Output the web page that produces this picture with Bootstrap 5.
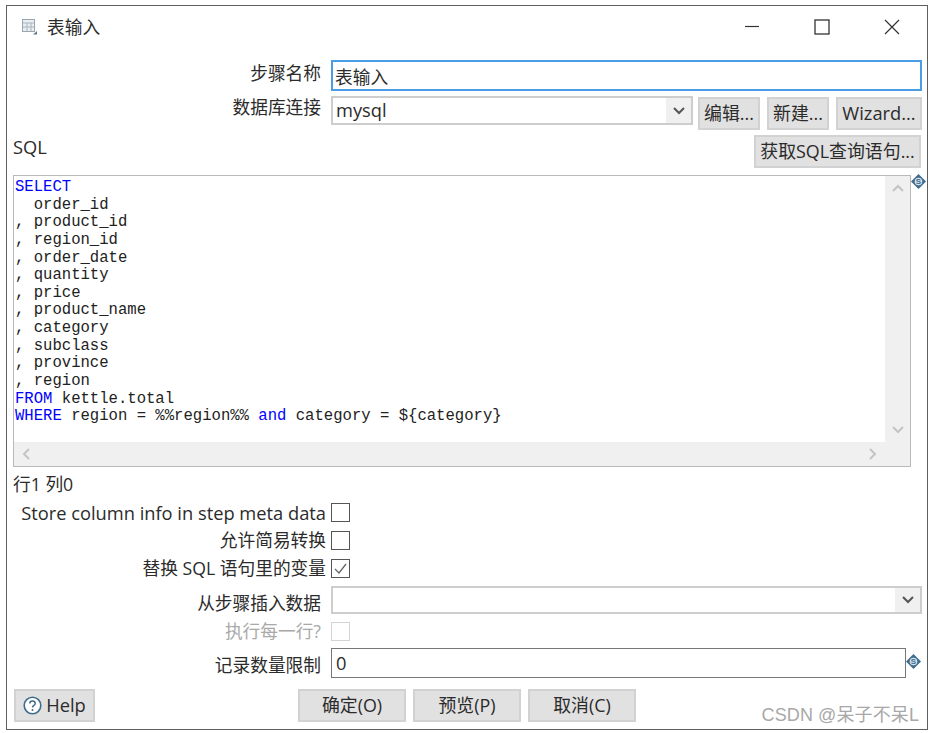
<!DOCTYPE html>
<html lang="zh-CN">
<head>
  <meta charset="UTF-8">
  <title>表输入</title>
  <link href="https://cdn.jsdelivr.net/npm/bootstrap@5.3.2/dist/css/bootstrap.min.css" rel="stylesheet">
  <style>
    body { background: #fff; color: #2b2b2b; font-family: "Open Sans", "Noto Sans CJK SC", sans-serif; font-size: 17.7px; line-height: 1.2; }
    .txt-latin { font-size: 18.3px; }
    .dlg-win { width: 922px; height: 725px; margin: 5px 0 0 6px; border: 1px solid #5f5f5f; padding: 0 5px 0 6px; position: relative; overflow: hidden; }
    .dlg-title { height: 54px; margin-left: -6px; margin-right: -5px; padding: 0 0 12px 15px; }
    .dlg-title-text { margin-left: 9px; padding-top: 2px; }
    .win-ctl { width: 70px; }
    .dlg-row { margin-top: 5px; }
    .dlg-label { width: 318px; padding-right: 10px; flex: none; text-align: right; }
    .dlg-label-check { padding-right: 5px; }
    .dlg-label-off { color: #a9a9a9; padding-right: 10px; }
    .lbl-up { padding-bottom: 4px; }
    .lbl-down { padding-top: 6px; line-height: 1; }
    .lbl-db { padding-top: 1px; }
    .h-name { height: 31px; }
    .h-db { height: 34px; }
    .h-sql { height: 33px; }
    .dlg-input { height: 31px; flex: 1 1 auto; border: 2px solid #4a9ee6; border-radius: 0; padding: 0 2px; font-size: 17.7px; color: #2b2b2b; }
    .dlg-input:focus { border-color: #4a9ee6; box-shadow: none; }
    .dlg-input-dark { height: 30px; border: 1px solid #777; padding: 0 4px 2px; font-size: 18.3px; }
    .dlg-input-dark:focus { border-color: #777; }
    .dlg-combo { height: 29px; border: 2px solid #cdcdcd; background: #fff; }
    .dlg-combo-text { padding-left: 3px; font-size: 18.3px; line-height: 23px; }
    .dlg-combo-arrow { width: 25px; background: #f0f0f0; }
    .dlg-combo-db { width: 362px; flex: none; margin-right: 5px; }
    .dlg-combo-step { height: 28px; margin-top: -1px; }
    .dlg-btn { background: #e1e1e1; border: 2px solid #d2d2d2; border-radius: 0; color: #2b2b2b; font-size: 17.9px; padding: 0; height: 33px; line-height: 1; white-space: nowrap; }
    .w-edit { width: 62px; margin-top: 1px; }
    .w-wizard { width: 86px; margin-top: 1px; font-size: 18.3px; }
    .w-query { width: 167px; margin-right: 1px; }
    .w-help { width: 81px; margin-left: 1px; font-size: 18.3px; }
    .w-main { width: 108px; }
    .dlg-sql-label { line-height: 24px; }
    .dlg-editor { margin-top: 7px; height: 292px; width: 898px; border: 1px solid #b9b9b9; display: grid; grid-template-columns: 1fr 25px; grid-template-rows: 1fr 24px; }
    .dlg-sql { margin: 0; padding: 3px 1px 0; font-family: "Liberation Mono", monospace; font-size: 15.6px; line-height: 17.62px; color: #222; overflow: hidden; }
    .sql-kw { color: #0000ff; }
    .dlg-scroll { background: #f0f0f0; }
    .dlg-status { height: 36px; }
    .dlg-check-row { height: 19px; margin-bottom: 9px; }
    .dlg-check-off { margin: 8px 0 7px; }
    .dlg-box { width: 19px; height: 19px; border: 1px solid #555; background: #fff; flex: none; }
    .dlg-box-off { border-color: #d4d4d4; }
    .dlg-var { position: absolute; }
    .var-sql { top: 168px; left: 904px; }
    .var-limit { flex: none; margin: 0 1px 3px 0; }
    .var-glyph { font: 700 8px "Liberation Sans", sans-serif; fill: #3f6d8e; text-anchor: middle; }
    .dlg-foot { margin-top: 11px; }
    .dlg-foot-main { margin-left: 203px; }
    .dlg-mark { position: absolute; right: 8px; bottom: 2px; color: #a8a8a8; font-family: "Liberation Sans", "Noto Sans CJK SC", sans-serif; font-size: 18px; letter-spacing: .1px; }
    .gap-7 { gap: 7px; }
    .btn-group-db { margin-right: 1px; }
    .help-ico { margin-right: 4px; }
  </style>
</head>
<body>

<div class="dlg-win">
  <!-- Title bar -->
  <div class="dlg-title d-flex align-items-center">
    <svg width="16" height="18" viewBox="0 0 16 18">
      <rect x="0.500" y="1.500" width="12" height="12" fill="#e8eef2" stroke="#9aa7b1"/>
      <path d="M1 5h11M1 9h11M5 5v8M9 5v8" stroke="#a9b5be" fill="none"/>
      <path d="M11 16.500l4-3.500v3.500z" fill="#5f7a8e"/>
    </svg>
    <span class="dlg-title-text">表输入</span>
    <div class="ms-auto d-flex align-items-center">
      <span class="win-ctl d-flex justify-content-center"><svg width="16" height="16" viewBox="0 0 16 16"><path d="M1 7.500h14" stroke="#333" stroke-width="1.200"/></svg></span>
      <span class="win-ctl d-flex justify-content-center"><svg width="16" height="16" viewBox="0 0 16 16"><rect x="1" y="1" width="14" height="14" fill="none" stroke="#333" stroke-width="1.300"/></svg></span>
      <span class="win-ctl d-flex justify-content-center"><svg width="16" height="16" viewBox="0 0 16 16"><path d="M1 1l14 14M15 1L1 15" stroke="#333" stroke-width="1.200"/></svg></span>
    </div>
  </div>

  <!-- Step name -->
  <div class="d-flex align-items-center h-name">
    <span class="dlg-label lbl-up">步骤名称</span>
    <input class="form-control dlg-input" value="表输入">
  </div>

  <!-- Connection -->
  <div class="d-flex align-items-start dlg-row h-db">
    <span class="dlg-label lbl-db">数据库连接</span>
    <div class="dlg-combo dlg-combo-db d-flex">
      <span class="dlg-combo-text flex-grow-1">mysql</span>
      <span class="dlg-combo-arrow d-flex align-items-center justify-content-center">
        <svg width="14" height="10" viewBox="0 0 14 10"><path d="M2 2l5 5 5-5" fill="none" stroke="#555" stroke-width="2"/></svg>
      </span>
    </div>
    <div class="d-flex gap-7 btn-group-db">
      <button class="btn dlg-btn w-edit">编辑...</button>
      <button class="btn dlg-btn w-edit">新建...</button>
      <button class="btn dlg-btn w-wizard">Wizard...</button>
    </div>
  </div>

  <!-- SQL heading -->
  <div class="d-flex justify-content-between dlg-row h-sql">
    <span class="dlg-sql-label txt-latin">SQL</span>
    <button class="btn dlg-btn w-query">获取SQL查询语句...</button>
  </div>

  <!-- SQL editor -->
  <div class="dlg-editor">
<pre class="dlg-sql"><span class="sql-kw">SELECT</span>
  order_id
, product_id
, region_id
, order_date
, quantity
, price
, product_name
, category
, subclass
, province
, region
<span class="sql-kw">FROM</span> kettle.total
<span class="sql-kw">WHERE</span> region = %%region%% <span class="sql-kw">and</span> category = ${category}</pre>
    <div class="dlg-scroll d-flex flex-column justify-content-between align-items-center py-2">
      <svg width="14" height="9" viewBox="0 0 14 9"><path d="M2 7l5-5 5 5" fill="none" stroke="#c4c4c4" stroke-width="2"/></svg>
      <svg width="14" height="9" viewBox="0 0 14 9"><path d="M2 2l5 5 5-5" fill="none" stroke="#c4c4c4" stroke-width="2"/></svg>
    </div>
    <div class="dlg-scroll d-flex justify-content-between align-items-center px-2">
      <svg width="9" height="14" viewBox="0 0 9 14"><path d="M7 2L2 7l5 5" fill="none" stroke="#c4c4c4" stroke-width="2"/></svg>
      <svg width="9" height="14" viewBox="0 0 9 14"><path d="M2 2l5 5-5 5" fill="none" stroke="#c4c4c4" stroke-width="2"/></svg>
    </div>
    <div class="dlg-scroll"></div>
  </div>
  <svg class="dlg-var var-sql" width="15" height="15" viewBox="0 0 15 15"><path d="M7.500 0L15 7.500 7.500 15 0 7.500z" fill="#3f6d8e"/><circle cx="7.500" cy="7.500" r="3.800" fill="#d5e0e8"/><text class="var-glyph" x="7.500" y="10.300">S</text></svg>

  <div class="dlg-status d-flex align-items-center">行1 列0</div>

  <!-- Options -->
  <div class="d-flex align-items-center dlg-check-row">
    <span class="dlg-label dlg-label-check text-nowrap txt-latin">Store column info in step meta data</span>
    <span class="dlg-box"></span>
  </div>
  <div class="d-flex align-items-center dlg-check-row">
    <span class="dlg-label dlg-label-check">允许简易转换</span>
    <span class="dlg-box"></span>
  </div>
  <div class="d-flex align-items-center dlg-check-row">
    <span class="dlg-label dlg-label-check">替换 SQL 语句里的变量</span>
    <span class="dlg-box d-flex align-items-center justify-content-center">
      <svg width="15" height="13" viewBox="0 0 15 13"><path d="M2 7l4 4 7-9" fill="none" stroke="#666" stroke-width="1.300"/></svg>
    </span>
  </div>

  <div class="d-flex align-items-center">
    <span class="dlg-label lbl-down">从步骤插入数据</span>
    <div class="dlg-combo dlg-combo-step flex-grow-1 d-flex justify-content-end">
      <span class="dlg-combo-arrow d-flex align-items-center justify-content-center">
        <svg width="14" height="10" viewBox="0 0 14 10"><path d="M2 2l5 5 5-5" fill="none" stroke="#555" stroke-width="2"/></svg>
      </span>
    </div>
  </div>

  <div class="d-flex align-items-center dlg-check-row dlg-check-off">
    <span class="dlg-label dlg-label-off">执行每一行?</span>
    <span class="dlg-box dlg-box-off"></span>
  </div>

  <div class="d-flex align-items-center">
    <span class="dlg-label lbl-down">记录数量限制</span>
    <input class="form-control dlg-input dlg-input-dark" value="0">
    <svg class="var-limit" width="15" height="15" viewBox="0 0 15 15"><path d="M7.500 0L15 7.500 7.500 15 0 7.500z" fill="#3f6d8e"/><circle cx="7.500" cy="7.500" r="3.800" fill="#d5e0e8"/><text class="var-glyph" x="7.500" y="10.300">S</text></svg>
  </div>

  <!-- Footer -->
  <div class="d-flex dlg-foot">
    <button class="btn dlg-btn w-help d-flex align-items-center justify-content-center">
      <svg class="help-ico" width="19" height="19" viewBox="0 0 19 19"><circle cx="9.500" cy="9.500" r="8.300" fill="#fff" stroke="#3f6d8e" stroke-width="1.600"/><path d="M6.800 7.500c0-3.400 5.400-3.400 5.400 0 0 2-2.700 1.900-2.700 4" fill="none" stroke="#3f6d8e" stroke-width="1.500"/><circle cx="9.500" cy="14" r="1" fill="#3f6d8e"/></svg>
      Help
    </button>
    <div class="d-flex gap-7 dlg-foot-main">
      <button class="btn dlg-btn w-main">确定(O)</button>
      <button class="btn dlg-btn w-main">预览(P)</button>
      <button class="btn dlg-btn w-main">取消(C)</button>
    </div>
  </div>

  <span class="dlg-mark">CSDN @呆子不呆L</span>
</div>

<script src="https://cdn.jsdelivr.net/npm/bootstrap@5.3.2/dist/js/bootstrap.bundle.min.js"></script>
</body>
</html>
